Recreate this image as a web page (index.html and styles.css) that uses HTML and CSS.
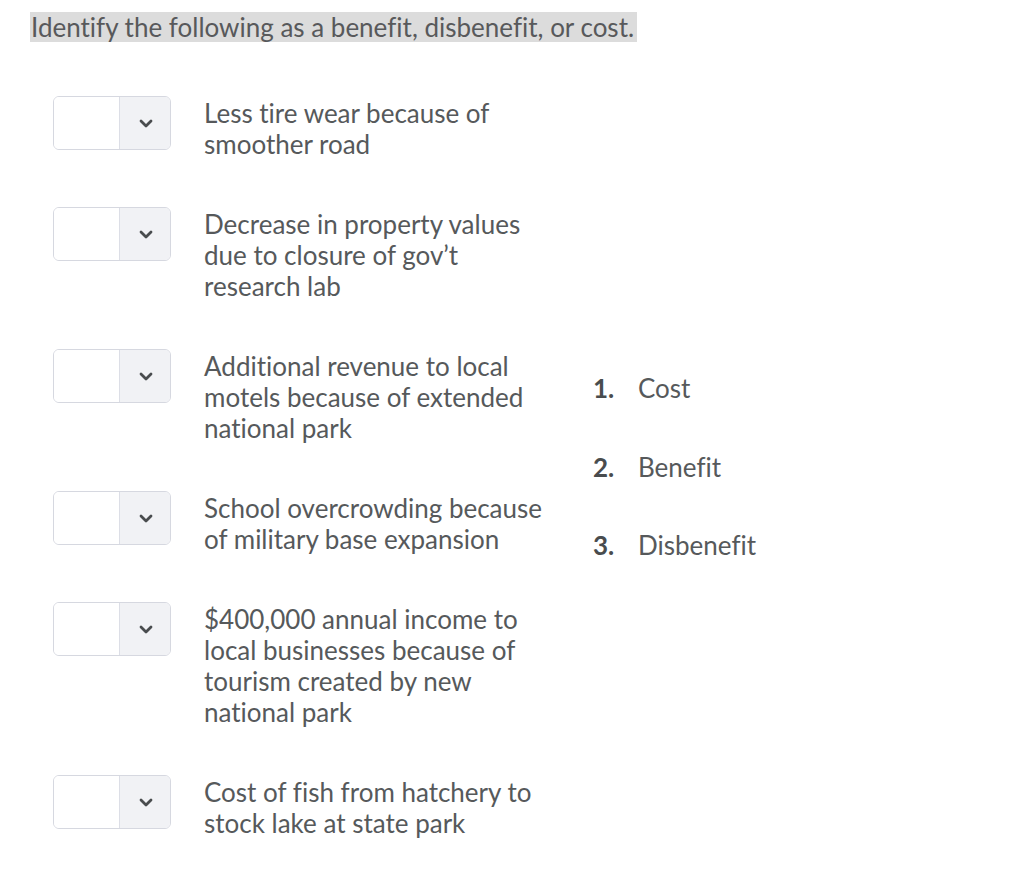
FILE: index.html
```html
<!DOCTYPE html>
<html lang="en">
<head>
<meta charset="utf-8">
<title>Identify</title>
<link rel="stylesheet" href="styles.css">
</head>
<body>
<div class="page">
  <h1 class="title"><span>Identify the following as a benefit, disbenefit, or cost.</span></h1>
  <div class="match">
    <div class="items">
      <div class="row">
        <div class="select"><div class="field"></div><div class="btn"><svg width="14" height="9" viewBox="0 0 14 9"><path d="M2 2l5 5 5-5" fill="none" stroke="#494c4e" stroke-width="2.8" stroke-linecap="round" stroke-linejoin="round"/></svg></div></div>
        <div class="text">Less tire wear because of smoother road</div>
      </div>
      <div class="row">
        <div class="select"><div class="field"></div><div class="btn"><svg width="14" height="9" viewBox="0 0 14 9"><path d="M2 2l5 5 5-5" fill="none" stroke="#494c4e" stroke-width="2.8" stroke-linecap="round" stroke-linejoin="round"/></svg></div></div>
        <div class="text">Decrease in property values due to closure of gov’t research lab</div>
      </div>
      <div class="row">
        <div class="select"><div class="field"></div><div class="btn"><svg width="14" height="9" viewBox="0 0 14 9"><path d="M2 2l5 5 5-5" fill="none" stroke="#494c4e" stroke-width="2.8" stroke-linecap="round" stroke-linejoin="round"/></svg></div></div>
        <div class="text">Additional revenue to local motels because of extended national park</div>
      </div>
      <div class="row">
        <div class="select"><div class="field"></div><div class="btn"><svg width="14" height="9" viewBox="0 0 14 9"><path d="M2 2l5 5 5-5" fill="none" stroke="#494c4e" stroke-width="2.8" stroke-linecap="round" stroke-linejoin="round"/></svg></div></div>
        <div class="text">School overcrowding because of military base expansion</div>
      </div>
      <div class="row">
        <div class="select"><div class="field"></div><div class="btn"><svg width="14" height="9" viewBox="0 0 14 9"><path d="M2 2l5 5 5-5" fill="none" stroke="#494c4e" stroke-width="2.8" stroke-linecap="round" stroke-linejoin="round"/></svg></div></div>
        <div class="text">$400,000 annual income to local businesses because of tourism created by new national park</div>
      </div>
      <div class="row">
        <div class="select"><div class="field"></div><div class="btn"><svg width="14" height="9" viewBox="0 0 14 9"><path d="M2 2l5 5 5-5" fill="none" stroke="#494c4e" stroke-width="2.8" stroke-linecap="round" stroke-linejoin="round"/></svg></div></div>
        <div class="text">Cost of fish from hatchery to stock lake at state park</div>
      </div>
    </div>
    <ol class="choices">
      <li><span class="num">1.</span><span>Cost</span></li>
      <li><span class="num">2.</span><span>Benefit</span></li>
      <li><span class="num">3.</span><span>Disbenefit</span></li>
    </ol>
  </div>
</div>
</body>
</html>
```
FILE: styles.css
```css
html, body {
  margin: 0;
  padding: 0;
  background: #ffffff;
}
body {
  font-family: Lato, "Open Sans", sans-serif;
  color: #56595b;
  font-variant-ligatures: none;
}
.page {
  padding: 12px 0 0 30px;
}
.title {
  margin: 0;
  font-weight: 400;
  font-size: 26px;
  line-height: 30px;
  color: #58595b;
}
.title span {
  background: #dcdcdc;
  display: inline-block;
  padding: 0 3px 0 1px;
}
.match {
  display: flex;
  align-items: center;
  padding: 54px 0 0 23px;
}
.items {
  display: flex;
  flex-direction: column;
  width: 540px;
}
.row {
  display: flex;
  align-items: flex-start;
  padding-bottom: 47px;
}
.row:last-child {
  padding-bottom: 20px;
}
.select {
  width: 118px;
  height: 54px;
  box-sizing: border-box;
  border: 1px solid #d6d8e0;
  border-radius: 6px;
  display: flex;
  overflow: hidden;
  flex-shrink: 0;
}
.field {
  width: 65px;
  background: #fff;
  border-right: 1px solid #dcdee6;
}
.btn {
  flex: 1;
  background: #f1f2f5;
  display: flex;
  align-items: center;
  justify-content: center;
  padding-left: 1px;
}
.text {
  margin-left: 33px;
  width: 350px;
  font-size: 26px;
  line-height: 31px;
  margin-top: 2px;
}
.choices {
  list-style: none;
  margin: 0;
  padding: 0;
  font-size: 26px;
  line-height: 30px;
  display: flex;
  flex-direction: column;
  gap: 48.5px;
  margin-top: -22px;
}
.choices li {
  display: flex;
}
.num {
  width: 45px;
  font-weight: 700;
  color: #494c4e;
}
```
